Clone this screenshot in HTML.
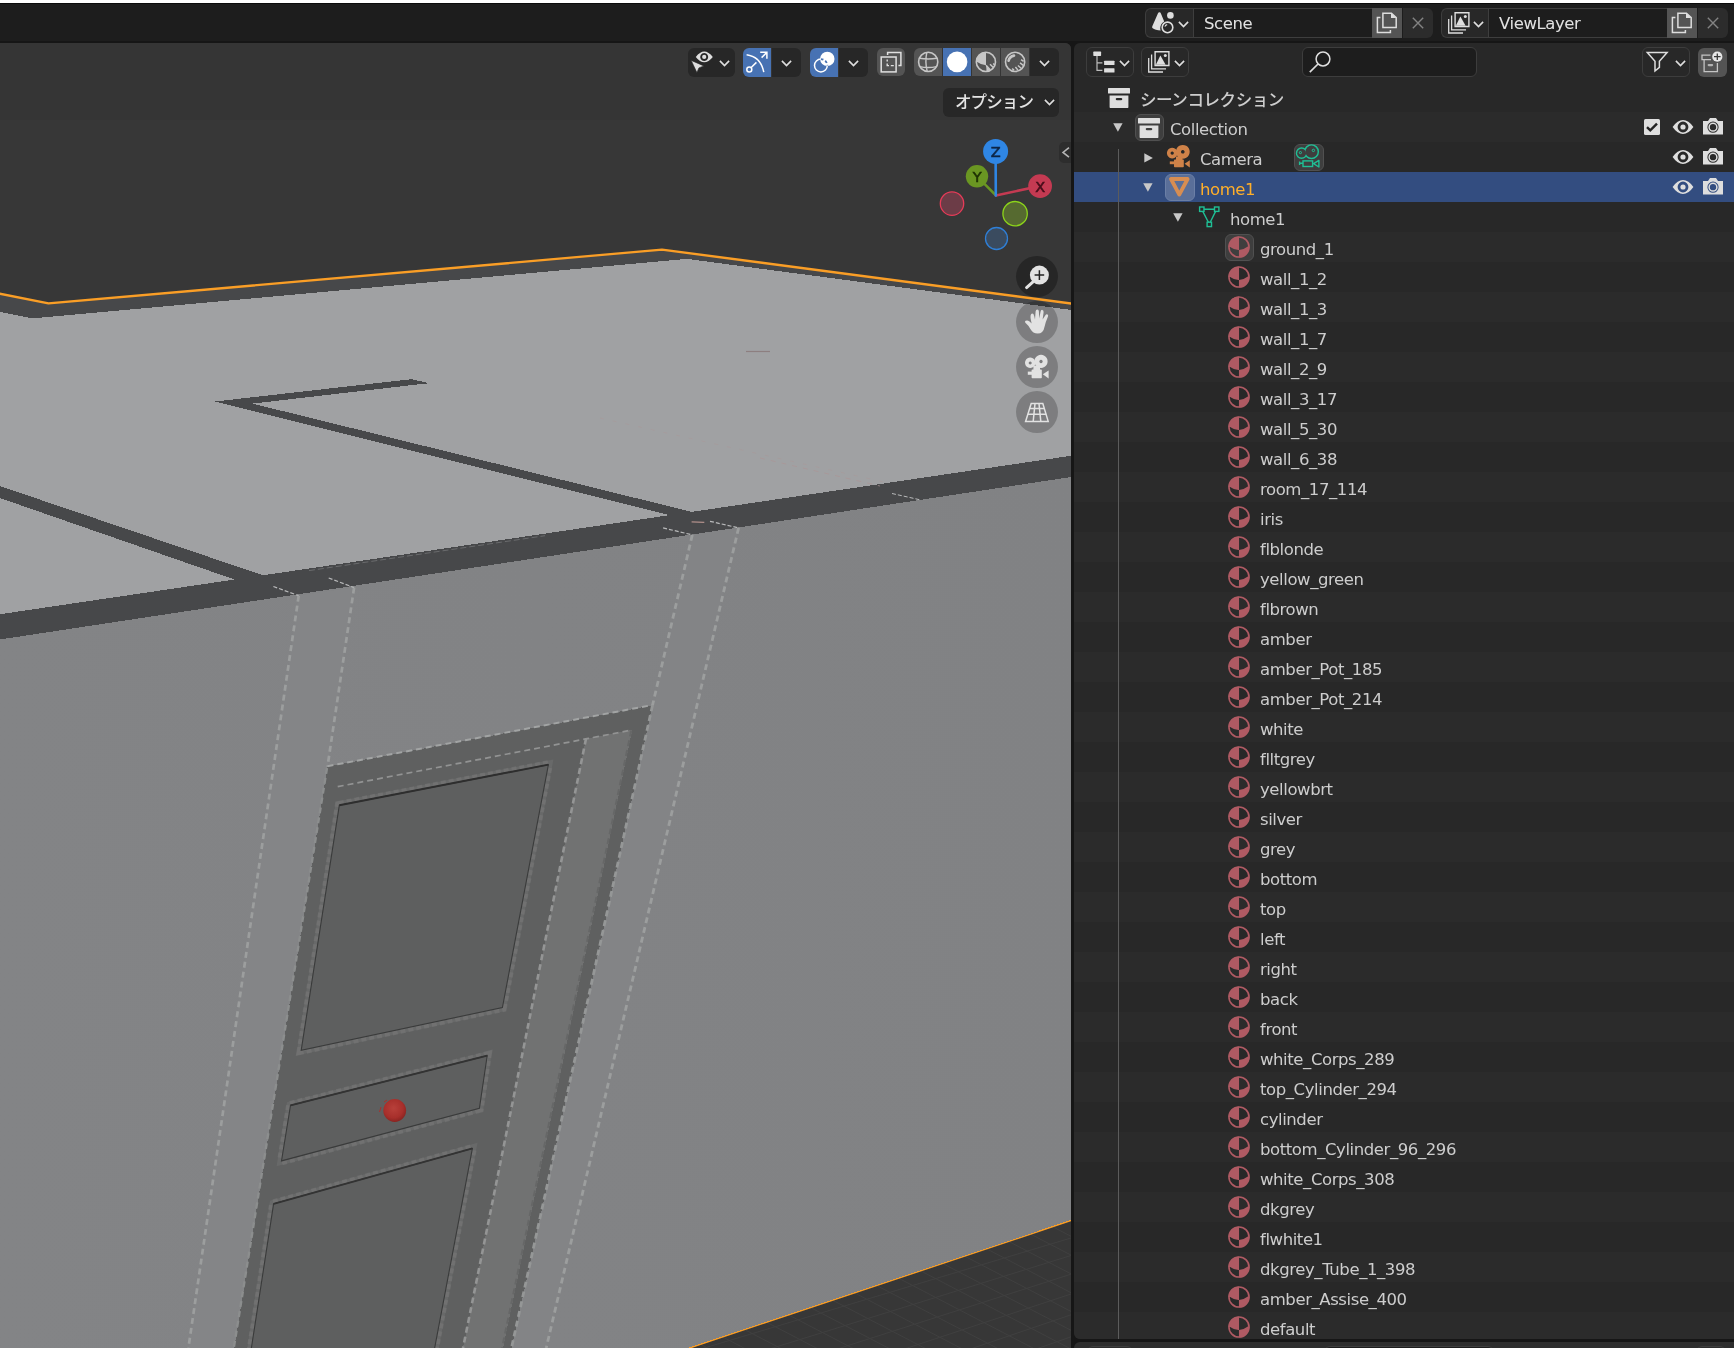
<!DOCTYPE html>
<html lang="ja"><head><meta charset="utf-8"><title>Blender</title>
<style>
html,body{margin:0;padding:0;}
body{width:1734px;height:1348px;overflow:hidden;background:#161616;position:relative;
 font-family:"DejaVu Sans", "Liberation Sans", "Noto Sans CJK JP", sans-serif;font-size:16.5px;color:#cdcdcd;}
div,span,svg{position:absolute;box-sizing:border-box;}
.t{white-space:nowrap;line-height:30px;height:30px;letter-spacing:-0.42px;}
#strip{left:0;top:0;width:1734px;height:3px;background:#fff;}
#topbar{left:0;top:3px;width:1734px;height:38px;background:#1d1d1d;will-change:transform;}
#view{left:0;top:43px;width:1071px;height:1305px;background:#373737;overflow:hidden;border-top-right-radius:6px;will-change:transform;}
#outl{left:1074px;top:43px;width:660px;height:1296px;background:#282828;overflow:hidden;border-top-left-radius:6px;border-bottom-left-radius:6px;will-change:transform;}
#bot{left:1074px;top:1342px;width:660px;height:10px;background:#2e2e2e;border-top-left-radius:6px;}
.row{left:0;width:660px;height:30px;}
.btn{border:1px solid #3d3d3d;border-radius:5px;background:#282828;}
.fld{background:#1d1d1d;border:1px solid #3d3d3d;}
.hl{background:#3e3e3e;border:1px solid #505050;border-radius:6px;}
</style></head><body>

<svg width="0" height="0" style="left:-10px;top:-10px"><defs>
<symbol id="mat" viewBox="0 0 22 22">
<clipPath id="mc"><circle cx="11" cy="11" r="10.4"/></clipPath>
<g clip-path="url(#mc)" fill="#af5a63">
<path d="M11.05 -2 H-2 V11.1 H2.2 Q6.49 14.34 11.05 14.09 Z"/>
<path d="M10.95 14.09 Q15.3 13.85 19.8 10.4 H24 V24 H10.95 Z"/>
</g>
<circle cx="11" cy="11" r="10.05" fill="none" stroke="#af5a63" stroke-width="1.6"/>
</symbol>
<symbol id="eye" viewBox="0 0 22 16">
<path d="M0.6 8 Q5.5 1 11 1 Q16.5 1 21.4 8 Q16.5 15 11 15 Q5.5 15 0.6 8 Z M11 2.6 A5.4 5.4 0 1 0 11 13.4 A5.4 5.4 0 1 0 11 2.6 Z" fill="#dedede" fill-rule="evenodd"/>
<circle cx="11" cy="8" r="2.6" fill="#dedede"/>
</symbol>
<symbol id="cam" viewBox="0 0 22 18">
<path d="M1 4 H6 L8 1 H14 L16 4 H21 V17.5 H1 Z M11 4.6 A5.6 5.6 0 1 0 11 15.8 A5.6 5.6 0 1 0 11 4.6 Z" fill="#dedede" fill-rule="evenodd"/>
<circle cx="11" cy="10.2" r="3.9" fill="none" stroke="#dedede" stroke-width="1.5"/>
</symbol>
<symbol id="chk" viewBox="0 0 16 16">
<rect x="0" y="0" width="16" height="16" rx="1.5" fill="#dedede"/>
<path d="M3 8.2 L6.3 11.4 L13 4.6" fill="none" stroke="#222" stroke-width="2.4"/>
</symbol>
<symbol id="coll" viewBox="0 0 22 20">
<rect x="0" y="0" width="22" height="5.6" rx="0.5" fill="#dedede"/>
<path d="M1.6 7.4 H20.4 V19.2 Q20.4 20 19.6 20 H2.4 Q1.6 20 1.6 19.2 Z M9 9.9 H13 Q14.3 9.9 14.3 11.1 Q14.3 12.3 13 12.3 H9 Q7.7 12.3 7.7 11.1 Q7.7 9.9 9 9.9 Z" fill="#dedede" fill-rule="evenodd"/>
</symbol>
<symbol id="chev" viewBox="0 0 10 6">
<path d="M0.8 0.8 L5 5 L9.2 0.8" fill="none" stroke="#dedede" stroke-width="1.5"/>
</symbol>
<symbol id="vl" viewBox="0 0 22 20">
<path d="M6 0.8 H21.2 V14 H6 Z M7.6 2.4 V12.4 H19.6 V2.4 Z" fill="#dedede" fill-rule="evenodd"/>
<path d="M8 12.4 L12 5 L15 9.5 L16.5 8 L19.6 12.4 Z" fill="#dedede"/>
<circle cx="16.8" cy="5" r="1.3" fill="#dedede"/>
<path d="M3.6 3.4 V16.4 H17.6" fill="none" stroke="#dedede" stroke-width="1.4"/>
<path d="M1 6 V19 H15" fill="none" stroke="#dedede" stroke-width="1.4"/>
</symbol>
<symbol id="copy" viewBox="0 0 22 22">
<path d="M7.5 1 H16 L21 5.5 V15.5 H7.5 Z" fill="none" stroke="#dedede" stroke-width="1.6"/>
<path d="M16 1 V5.5 H21 Z" fill="#dedede"/>
<path d="M4.6 5 H1.2 V20.6 H14.6 V18" fill="none" stroke="#dedede" stroke-width="1.6"/>
</symbol>
<symbol id="xx" viewBox="0 0 12 12">
<path d="M1 1 L11 11 M11 1 L1 11" fill="none" stroke="#8a8a8a" stroke-width="1.4"/>
</symbol>
</defs></svg>
<div id="strip"></div><div id="topbar"></div><div style="left:0;top:3px;width:1734px;height:1px;background:#0b0b0b"></div>
<div id="view">
<div style="left:0;top:0;width:1071px;height:77px;background:#353535"></div>
<svg width="1071" height="1305" viewBox="0 43 1071 1305" style="left:0;top:0">
<defs><linearGradient id="wg" x1="0" y1="0" x2="1" y2="0"><stop offset="0" stop-color="#838486"/><stop offset="1" stop-color="#818284"/></linearGradient><radialGradient id="knob" cx="0.45" cy="0.4" r="0.6"><stop offset="0" stop-color="#b8403a"/><stop offset="0.7" stop-color="#a72f2b"/><stop offset="1" stop-color="#8a2421"/></radialGradient></defs>
<g stroke="#414141" stroke-width="1" opacity="0.9">
<line x1="1071.0" y1="1238.0" x2="471.0" y2="1418.0" stroke="#414141" stroke-width="1" />
<line x1="1071.0" y1="1255.5" x2="471.0" y2="1441.5" stroke="#414141" stroke-width="1" />
<line x1="1071.0" y1="1274.2" x2="471.0" y2="1466.2" stroke="#414141" stroke-width="1" />
<line x1="1071.0" y1="1294.0" x2="471.0" y2="1492.0" stroke="#414141" stroke-width="1" />
<line x1="1071.0" y1="1314.8" x2="471.0" y2="1518.8" stroke="#414141" stroke-width="1" />
<line x1="1071.0" y1="1336.8" x2="471.0" y2="1546.8" stroke="#414141" stroke-width="1" />
<line x1="1071.0" y1="1359.8" x2="471.0" y2="1575.8" stroke="#414141" stroke-width="1" />
<line x1="1071.0" y1="1384.0" x2="471.0" y2="1606.0" stroke="#414141" stroke-width="1" />
<line x1="1071.0" y1="1409.2" x2="471.0" y2="1637.2" stroke="#414141" stroke-width="1" />
<line x1="1071.0" y1="1435.5" x2="471.0" y2="1669.5" stroke="#414141" stroke-width="1" />
<line x1="1071.0" y1="1463.0" x2="471.0" y2="1703.0" stroke="#414141" stroke-width="1" />
<line x1="1071.0" y1="1491.5" x2="471.0" y2="1737.5" stroke="#414141" stroke-width="1" />
<line x1="1071.0" y1="1521.2" x2="471.0" y2="1773.2" stroke="#414141" stroke-width="1" />
<line x1="1071.0" y1="1552.0" x2="471.0" y2="1810.0" stroke="#414141" stroke-width="1" />
<line x1="700.0" y1="1344.0" x2="870.0" y2="1432.4" stroke="#414141" stroke-width="1" />
<line x1="722.0" y1="1336.6" x2="892.0" y2="1425.0" stroke="#414141" stroke-width="1" />
<line x1="744.0" y1="1329.3" x2="914.0" y2="1417.7" stroke="#414141" stroke-width="1" />
<line x1="766.0" y1="1321.9" x2="936.0" y2="1410.3" stroke="#414141" stroke-width="1" />
<line x1="788.0" y1="1314.6" x2="958.0" y2="1403.0" stroke="#414141" stroke-width="1" />
<line x1="810.0" y1="1307.3" x2="980.0" y2="1395.7" stroke="#414141" stroke-width="1" />
<line x1="832.0" y1="1299.9" x2="1002.0" y2="1388.3" stroke="#414141" stroke-width="1" />
<line x1="854.0" y1="1292.6" x2="1024.0" y2="1381.0" stroke="#414141" stroke-width="1" />
<line x1="876.0" y1="1285.2" x2="1046.0" y2="1373.6" stroke="#414141" stroke-width="1" />
<line x1="898.0" y1="1277.9" x2="1068.0" y2="1366.3" stroke="#414141" stroke-width="1" />
<line x1="920.0" y1="1270.5" x2="1090.0" y2="1358.9" stroke="#414141" stroke-width="1" />
<line x1="942.0" y1="1263.2" x2="1112.0" y2="1351.6" stroke="#414141" stroke-width="1" />
<line x1="964.0" y1="1255.8" x2="1134.0" y2="1344.2" stroke="#414141" stroke-width="1" />
<line x1="986.0" y1="1248.5" x2="1156.0" y2="1336.9" stroke="#414141" stroke-width="1" />
<line x1="1008.0" y1="1241.1" x2="1178.0" y2="1329.5" stroke="#414141" stroke-width="1" />
<line x1="1030.0" y1="1233.8" x2="1200.0" y2="1322.2" stroke="#414141" stroke-width="1" />
<line x1="1052.0" y1="1226.4" x2="1222.0" y2="1314.8" stroke="#414141" stroke-width="1" />
<line x1="1074.0" y1="1219.1" x2="1244.0" y2="1307.5" stroke="#414141" stroke-width="1" />
<line x1="1096.0" y1="1211.7" x2="1266.0" y2="1300.1" stroke="#414141" stroke-width="1" />
<line x1="1118.0" y1="1204.4" x2="1288.0" y2="1292.8" stroke="#414141" stroke-width="1" />
<line x1="1140.0" y1="1197.0" x2="1310.0" y2="1285.4" stroke="#414141" stroke-width="1" />
<line x1="1162.0" y1="1189.7" x2="1332.0" y2="1278.1" stroke="#414141" stroke-width="1" />
</g>
<polygon points="-10.0,291.8 48.5,303.4 662.0,249.6 1085.0,305.3 1085.0,1215.3 688.0,1348.0 680.0,1360.0 -10.0,1360.0" fill="#47484a" shape-rendering="crispEdges" />
<polygon points="-10.0,291.8 48.5,303.4 662.0,249.6 1085.0,305.3 1085.0,1215.3 688.0,1348.0 680.0,1360.0 -10.0,1360.0" fill="none" stroke="#fa9e26" stroke-width="2.4" stroke-linejoin="round"/>
<polygon points="-10.0,310.0 32.0,318.4 687.2,258.9 1085.0,311.8 1085.0,453.7 -10.0,615.7" fill="#a0a1a3" shape-rendering="crispEdges" />
<polygon points="-10.0,482.7 265.3,576.1 235.3,579.8 -10.0,494.6" fill="#47484a" shape-rendering="crispEdges" />
<polygon points="215.0,401.5 411.4,379.2 429.4,383.2 408.4,385.5 252.5,403.6 692.3,512.0 670.7,515.4" fill="#47484a" shape-rendering="crispEdges" />
<line x1="746.0" y1="351.5" x2="770.0" y2="351.5" stroke="#8d7f80" stroke-width="1.2" />
<line x1="600.0" y1="418.0" x2="888.0" y2="483.0" stroke="#a8999a" stroke-width="1" stroke-dasharray="4 9" opacity="0.6"/>
<line x1="760.0" y1="458.0" x2="880.0" y2="486.0" stroke="#ab9596" stroke-width="1" stroke-dasharray="5 6" opacity="0.7"/>
<polygon points="-10.0,641.0 1085.0,474.9 1085.0,1215.3 688.0,1348.0 680.0,1360.0 -10.0,1360.0" fill="url(#wg)" shape-rendering="crispEdges" />
<line x1="273.4" y1="586.5" x2="298.7" y2="595.7" stroke="#b9babb" stroke-width="1.2" stroke-dasharray="4 2"/>
<line x1="328.7" y1="578.0" x2="354.1" y2="587.6" stroke="#b9babb" stroke-width="1.2" stroke-dasharray="4 2"/>
<line x1="663.1" y1="527.9" x2="692.3" y2="534.9" stroke="#b9babb" stroke-width="1.2" stroke-dasharray="4 2"/>
<line x1="710.0" y1="521.3" x2="738.6" y2="527.9" stroke="#b9babb" stroke-width="1.2" stroke-dasharray="4 2"/>
<line x1="691.6" y1="521.9" x2="704.3" y2="522.4" stroke="#b08f8a" stroke-width="1.2" />
<line x1="892.0" y1="493.5" x2="920.0" y2="499.8" stroke="#b9babb" stroke-width="1.0" stroke-dasharray="4 2"/>
<line x1="309.0" y1="570.6" x2="545.0" y2="535.7" stroke="#6a6b6d" stroke-width="1" stroke-dasharray="6 3"/>
<polygon points="298.7,595.7 354.1,587.6 327.5,766.6 234.3,1348.0 188.4,1348.0" fill="#848587" shape-rendering="crispEdges" />
<polygon points="692.3,534.9 738.6,527.9 546.2,1348.0 511.5,1348.0" fill="#838486" shape-rendering="crispEdges" />
<polygon points="327.5,766.6 652.5,705.4 511.5,1348.0 234.3,1348.0" fill="#5f6060" shape-rendering="crispEdges" />
<polygon points="586.0,738.7 632.3,729.9 503.0,1348.0 463.0,1348.0" fill="#717272" shape-rendering="crispEdges" />
<clipPath id="leafclip"><polygon points="328,760 566,716 448,1348 238,1348"/></clipPath>
<g clip-path="url(#leafclip)">
<polygon points="339.3,805.3 548.4,764.6 502.4,1007.6 301.2,1050.3" fill="none" stroke="#686969" stroke-width="8" stroke-linejoin="miter"/>
<polygon points="339.3,805.3 548.4,764.6 502.4,1007.6 301.2,1050.3" fill="none" stroke="#7c7d7d" stroke-width="9" stroke-linejoin="miter" stroke-dasharray="5 3" opacity="0.45"/>
<polygon points="339.3,805.3 548.4,764.6 502.4,1007.6 301.2,1050.3" fill="#5e5f5f" stroke="#3a3b3b" stroke-width="1.1"/>
<line x1="339.3" y1="805.3" x2="548.4" y2="764.6" stroke="#2e2e2e" stroke-width="1.9" />
<polygon points="290.5,1105.4 487.2,1055.6 479.4,1108.4 281.5,1160.9" fill="none" stroke="#686969" stroke-width="8" stroke-linejoin="miter"/>
<polygon points="290.5,1105.4 487.2,1055.6 479.4,1108.4 281.5,1160.9" fill="none" stroke="#7c7d7d" stroke-width="9" stroke-linejoin="miter" stroke-dasharray="5 3" opacity="0.45"/>
<polygon points="290.5,1105.4 487.2,1055.6 479.4,1108.4 281.5,1160.9" fill="#5e5f5f" stroke="#3a3b3b" stroke-width="1.1"/>
<line x1="290.5" y1="1105.4" x2="487.2" y2="1055.6" stroke="#333333" stroke-width="1.9" />
<polygon points="273.6,1203.8 472.4,1148.4 430.5,1370.0 248.0,1370.0" fill="none" stroke="#686969" stroke-width="8" stroke-linejoin="miter"/>
<polygon points="273.6,1203.8 472.4,1148.4 430.5,1370.0 248.0,1370.0" fill="none" stroke="#7c7d7d" stroke-width="9" stroke-linejoin="miter" stroke-dasharray="5 3" opacity="0.45"/>
<polygon points="273.6,1203.8 472.4,1148.4 430.5,1370.0 248.0,1370.0" fill="#5e5f5f" stroke="#3a3b3b" stroke-width="1.1"/>
<line x1="273.6" y1="1203.8" x2="472.4" y2="1148.4" stroke="#333333" stroke-width="1.9" />
</g>
<polyline points="298.7,595.7 188.4,1348.0" fill="none" stroke="#9c9e9e" stroke-width="2.7" stroke-dasharray="6 4"/>
<polyline points="354.1,587.6 327.5,766.6" fill="none" stroke="#9c9e9e" stroke-width="2.7" stroke-dasharray="6 4"/>
<polyline points="327.0,768.0 233.8,1348.0" fill="none" stroke="#8c8e8e" stroke-width="2.4" stroke-dasharray="6 4"/>
<polyline points="327.5,766.2 652.5,705.0" fill="none" stroke="#a2a4a4" stroke-width="2.0" stroke-dasharray="6 4"/>
<polyline points="337.7,786.6 587.0,738.7 632.3,729.9" fill="none" stroke="#929393" stroke-width="1.7" stroke-dasharray="6 4"/>
<polyline points="692.3,534.9 652.5,705.4" fill="none" stroke="#9c9e9e" stroke-width="2.8" stroke-dasharray="6 4"/>
<polyline points="652.5,705.4 511.5,1348.0" fill="none" stroke="#959797" stroke-width="2.8" stroke-dasharray="6 4"/>
<polyline points="738.6,527.9 546.2,1348.0" fill="none" stroke="#9c9e9e" stroke-width="2.8" stroke-dasharray="6 4"/>
<polyline points="586.0,738.7 463.0,1348.0" fill="none" stroke="#949595" stroke-width="2.6" stroke-dasharray="6 4"/>
<polyline points="631.3,730.5 502.0,1348.0" fill="none" stroke="#666767" stroke-width="2.0" stroke-dasharray="6 4"/>
<circle cx="394.7" cy="1110.5" r="11.4" fill="url(#knob)"/>
<path d="M381 1107 l-1.5 5 M384 1102 l3 -2" stroke="#a8302c" stroke-width="1" fill="none"/>
</svg>
<div style="left:688.0px;top:4.5px;width:46.5px;height:29.0px;background:#272727;border-radius:6px"></div>
<svg style="left:689.0px;top:6.0px" width="26" height="26" viewBox="689 49 26 26">
<path fill-rule="evenodd" fill="#dedede" d="M695.8 56.9 Q700 51.4 704.2 51.4 Q708.6 51.4 712.8 56.9 Q708.6 62.3 704.2 62.3 Q700 62.3 695.8 56.9 Z M704.2 52.9 a4 4 0 1 0 0.01 0 Z"/>
<circle cx="704.2" cy="56.9" r="2.1" fill="#dedede"/>
<path d="M691.2 60.4 L703.8 65.9 L698.9 67.9 L696.9 72.6 Z" fill="#dedede" stroke="#272727" stroke-width="0.6"/></svg>
<svg style="left:719.4px;top:16.7px" width="11" height="7" viewBox="0 0 11 7"><path d="M0.9 0.9 L5.5 5.6 L10.1 0.9" fill="none" stroke="#dedede" stroke-width="1.6"/></svg>
<div style="left:743.0px;top:4.5px;width:28.2px;height:29.0px;background:#4772b3;border-radius:6px 0 0 6px"></div>
<div style="left:771.8px;top:4.5px;width:29.4px;height:29.0px;background:#272727;border-radius:0 6px 6px 0"></div>
<svg style="left:744.0px;top:6.0px" width="26" height="26" viewBox="744 49 26 26">
<g fill="none" stroke="#ffffff" stroke-width="1.5">
<path d="M746.6 54.8 Q760.6 56.6 763.8 72.2"/>
<circle cx="749.3" cy="69.4" r="2.5"/>
<path d="M751.2 67.5 L756.4 62.4"/>
<path d="M761.6 57.6 L766.8 52.4 M760.2 52.3 H766.9 V58.8"/></g></svg>
<svg style="left:780.5px;top:16.7px" width="11" height="7" viewBox="0 0 11 7"><path d="M0.9 0.9 L5.5 5.6 L10.1 0.9" fill="none" stroke="#dedede" stroke-width="1.6"/></svg>
<div style="left:810.0px;top:4.5px;width:28.2px;height:29.0px;background:#4772b3;border-radius:6px 0 0 6px"></div>
<div style="left:838.8px;top:4.5px;width:29.4px;height:29.0px;background:#272727;border-radius:0 6px 6px 0"></div>
<svg style="left:811.0px;top:6.0px" width="26" height="26" viewBox="811 49 26 26">
<circle cx="827.3" cy="58.9" r="7.2" fill="#ffffff"/>
<circle cx="820.9" cy="65.5" r="6.4" fill="none" stroke="#ffffff" stroke-width="1.5"/>
<path d="M820.9 59.1 A6.4 6.4 0 0 1 827.3 65.5" fill="none" stroke="#4772b3" stroke-width="1.7" stroke-dasharray="2.6 2"/></svg>
<svg style="left:847.6px;top:16.7px" width="11" height="7" viewBox="0 0 11 7"><path d="M0.9 0.9 L5.5 5.6 L10.1 0.9" fill="none" stroke="#dedede" stroke-width="1.6"/></svg>
<div style="left:877.2px;top:5.0px;width:27.6px;height:28.2px;background:#545454;border-radius:6px"></div>
<svg style="left:878.0px;top:6.0px" width="26" height="26" viewBox="878 49 26 26">
<g fill="none" stroke="#e0e0e0" stroke-width="1.5">
<path d="M887.6 55 V52.4 H900.9 V65.6 H898.4"/>
<rect x="881.2" y="57" width="14.9" height="14.9"/>
<path d="M887.2 59.6 V61.6 M887.2 63.4 V65.6 H889 M890.8 65.6 H893.8" stroke-width="1.4"/></g></svg>
<div style="left:914.0px;top:5.0px;width:28.4px;height:28.2px;background:#545454;border-radius:6px 0 0 6px"></div>
<div style="left:943.0px;top:5.0px;width:28.2px;height:28.2px;background:#4772b3;border-radius:0"></div>
<div style="left:972.0px;top:5.0px;width:28.2px;height:28.2px;background:#545454;border-radius:0"></div>
<div style="left:1001.0px;top:5.0px;width:28.2px;height:28.2px;background:#545454;border-radius:0"></div>
<div style="left:1030.0px;top:5.0px;width:29.2px;height:28.2px;background:#272727;border-radius:0 6px 6px 0"></div>
<svg style="left:914.0px;top:5.0px" width="116" height="29" viewBox="914 48 116 29">
<g fill="none" stroke="#c6c6c6" stroke-width="1.6">
<circle cx="928.2" cy="61.9" r="9.6"/>
<path d="M919.4 58.3 Q928 59.6 937 58.3 M919.8 66.6 Q928 68.4 936.6 66.6 M926.8 52.4 Q924.8 62 927.2 71.4" stroke-width="1.4"/>
</g>
<circle cx="957.1" cy="61.9" r="10.3" fill="#ffffff"/>
<clipPath id="mp"><circle cx="985.9" cy="61.9" r="9.8"/></clipPath>
<g clip-path="url(#mp)">
<path d="M986 50 H974 V62.1 H977.2 Q981.4 65.2 986 65.3 Z" fill="#c6c6c6"/>
<path d="M986.1 65.3 L990.2 69.8 M990 64.2 L993.6 67.8 M993.2 63.5 L995.6 65.9" stroke="#c6c6c6" stroke-width="1.5" fill="none"/>
<path d="M986.1 65.3 L986.6 72 L990.2 69.8 Z" fill="#c6c6c6"/>
</g>
<circle cx="985.9" cy="61.9" r="9.6" fill="none" stroke="#c6c6c6" stroke-width="1.6"/>
<clipPath id="rp"><circle cx="1015.1" cy="61.9" r="9.8"/></clipPath>
<g clip-path="url(#rp)" fill="none" stroke="#c6c6c6">
<path d="M1008.6 60.7 Q1009.4 56.6 1014 55.6" stroke-width="2.7" stroke-linecap="round"/>
<path d="M1012.2 68.4 L1014 70.3 M1015.4 67.1 L1017.9 69.9 M1017.9 65.5 L1021.1 68.2 M1020 62.8 L1023.3 65.3 M1021.1 59.6 L1023.6 61.4" stroke-width="1.5"/>
</g>
<circle cx="1015.1" cy="61.9" r="9.6" fill="none" stroke="#c6c6c6" stroke-width="1.6"/>
</svg>
<svg style="left:1038.5px;top:16.7px" width="11" height="7" viewBox="0 0 11 7"><path d="M0.9 0.9 L5.5 5.6 L10.1 0.9" fill="none" stroke="#dedede" stroke-width="1.6"/></svg>
<div style="left:943.0px;top:45.0px;width:116.2px;height:28.6px;background:#272727;border-radius:6px"></div>
<span class="t" style="left:955px;top:45px;color:#e4e4e4;letter-spacing:-0.9px;font-weight:500">オプション</span>
<svg style="left:1043.9px;top:56.3px" width="11" height="7" viewBox="0 0 11 7"><path d="M0.9 0.9 L5.5 5.6 L10.1 0.9" fill="none" stroke="#dedede" stroke-width="1.6"/></svg>
<div style="left:1059.4px;top:99.0px;width:14.0px;height:20.6px;background:#2d2d2d;border-radius:5px 0 0 5px"></div>
<svg style="left:1060.0px;top:102.0px" width="11" height="15" viewBox="1060 145 11 15"><path d="M1069 147.6 L1063 152.4 L1069 157.2" fill="none" stroke="#b4b4b4" stroke-width="1.6"/></svg>
<svg style="left:935.0px;top:92.0px" width="125" height="120" viewBox="935 135 125 120">
<g stroke-width="2.6" stroke-linecap="round">
<line x1="995.9" y1="195.4" x2="977" y2="176.3" stroke="#6a9622"/>
<line x1="995.9" y1="195.4" x2="1040.1" y2="186.1" stroke="#c43a52"/>
<line x1="995.8" y1="195.4" x2="995.6" y2="151.4" stroke="#2f86e4"/>
</g>
<circle cx="952" cy="203.6" r="11.7" fill="#6c3c47" stroke="#e63b58" stroke-width="1.3"/>
<circle cx="1015.1" cy="213.7" r="12.2" fill="#566a30" stroke="#8cd41a" stroke-width="1.3"/>
<circle cx="996.5" cy="238.5" r="11" fill="#3a4b5f" stroke="#2f7fd6" stroke-width="1.3"/>
<circle cx="977" cy="176.3" r="11.2" fill="#6a9622"/>
<circle cx="1040.1" cy="186.1" r="11.9" fill="#c43a52"/>
<circle cx="995.6" cy="151.4" r="12.5" fill="#2f86e4"/>
<g font-family='"DejaVu Sans","Liberation Sans",sans-serif' font-size="14.5" text-anchor="middle" stroke-width="0.55">
<text x="995.7" y="156.8" fill="#0c2545" stroke="#0c2545">Z</text>
<text x="977.2" y="181.6" fill="#1d3003" stroke="#1d3003">Y</text>
<text x="1040.2" y="191.5" fill="#470d1a" stroke="#470d1a">X</text></g>
</svg>
<div style="left:1016.1px;top:212.6px;width:41.8px;height:41.8px;border-radius:50%;background:rgba(0,0,0,0.30)"></div>
<div style="left:1016.1px;top:258.0px;width:41.8px;height:41.8px;border-radius:50%;background:rgba(0,0,0,0.22)"></div>
<div style="left:1016.1px;top:302.8px;width:41.8px;height:41.8px;border-radius:50%;background:rgba(0,0,0,0.22)"></div>
<div style="left:1016.1px;top:347.9px;width:41.8px;height:41.8px;border-radius:50%;background:rgba(0,0,0,0.22)"></div>
<svg style="left:1020.0px;top:217.0px" width="36" height="170" viewBox="1020 260 36 170">
<circle cx="1039.4" cy="275.1" r="9.5" fill="#e2e2e2"/>
<path d="M1033 281.8 L1026.6 287.6" stroke="#e2e2e2" stroke-width="3" stroke-linecap="round"/>
<path d="M1034.6 275.1 H1044.2 M1039.4 270.3 V279.9" stroke="#222" stroke-width="1.5"/>
<path fill="#e2e2e2" d="M1031 320.6 Q1029.6 314.4 1032 313.6 Q1033.6 313.4 1034.2 316 L1035 319.4 L1035.6 311.6 Q1035.8 309.6 1037.3 309.6 Q1038.8 309.7 1038.9 311.6 L1039.2 318.6 L1040.6 311.4 Q1041 309.6 1042.4 309.9 Q1043.8 310.3 1043.6 312.2 L1042.6 319.4 L1045.4 315.2 Q1046.4 313.8 1047.6 314.6 Q1048.6 315.4 1047.8 317 Q1045.6 322 1044.6 326.4 Q1043.4 333.4 1037.6 333.6 Q1033 333.6 1030.4 329 Q1028.4 325.4 1025.4 322.8 Q1024.4 321.6 1025.6 320.8 Q1027.4 320 1029.2 321.2 Q1030.4 322 1031.6 323.6 Z"/>
<path fill-rule="evenodd" fill="#e2e2e2" d="M1030.2 357.6 a5.2 5.2 0 1 0 0.01 0 Z M1030.2 361.4 a1.5 1.5 0 1 1 -0.01 0 Z"/>
<path fill-rule="evenodd" fill="#e2e2e2" d="M1041 354.8 a6.6 6.6 0 1 0 0.01 0 Z M1041 359.8 a1.7 1.7 0 1 1 -0.01 0 Z"/>
<rect x="1031.6" y="369.6" width="10.2" height="8.6" rx="0.8" fill="#e2e2e2"/>
<rect x="1027.8" y="371.6" width="4.4" height="3.2" fill="#e2e2e2"/><rect x="1033.4" y="365.6" width="6.6" height="4.6" fill="#e2e2e2"/>
<path d="M1042.8 374.2 L1048.6 370.6 V378.4 Z" fill="#e2e2e2"/>
<g fill="none" stroke="#e2e2e2" stroke-width="1.5">
<path d="M1031.2 403.6 H1042.8 L1048.2 421.4 H1025.6 Z"/>
<path d="M1035 403.6 L1033.2 421.4 M1039 403.6 L1040.8 421.4 M1029.6 408.4 H1044.4 M1027.8 414.2 H1046.2"/></g>
</svg>
</div>
<div id="outl">
<div class="btn" style="left:12px;top:4px;width:48px;height:30px;border-radius:6px"></div>
<svg style="left:18.0px;top:7.0px" width="25" height="25" viewBox="1092 50 25 25">
<rect x="1093.3" y="51.6" width="7.8" height="4.3" rx="0.6" fill="#dedede"/>
<rect x="1104.1" y="60.7" width="10.4" height="4.3" rx="0.6" fill="#dedede"/>
<rect x="1104.1" y="68.2" width="10.4" height="4.3" rx="0.6" fill="#dedede"/>
<path d="M1097 55.9 V70.4 H1102.4 M1097 62.8 H1102.4" fill="none" stroke="#bdbdbd" stroke-width="1.2"/>
</svg>
<svg style="left:44.5px;top:16.8px" width="11" height="7" viewBox="0 0 11 7"><path d="M0.9 0.9 L5.5 5.6 L10.1 0.9" fill="none" stroke="#dedede" stroke-width="1.6"/></svg>
<div class="btn" style="left:67px;top:4px;width:48px;height:30px;border-radius:6px"></div>
<svg style="left:73.2px;top:7.4px" width="25" height="25" viewBox="1147.2 50.4 25 25"><g transform="translate(1148.2 51.4)">
<path fill-rule="evenodd" fill="#dedede" d="M6.4 0 H21.6 V15.2 H6.4 Z M7.8 1.4 V13.8 H20.2 V1.4 Z"/>
<path d="M7.8 13.8 L12.4 4.4 L17.6 13.8 Z" fill="#dedede"/><circle cx="17.3" cy="4.6" r="1.5" fill="#dedede"/>
<path d="M3.6 3.6 V17.9 H18" fill="none" stroke="#dedede" stroke-width="1.3"/>
<path d="M0.7 7 V21 H15" fill="none" stroke="#dedede" stroke-width="1.3"/></g></svg>
<svg style="left:99.5px;top:16.9px" width="11" height="7" viewBox="0 0 11 7"><path d="M0.9 0.9 L5.5 5.6 L10.1 0.9" fill="none" stroke="#dedede" stroke-width="1.6"/></svg>
<div class="btn" style="left:228px;top:4px;width:175px;height:30px;border-radius:6px;background:#1d1d1d"></div>
<svg style="left:232.0px;top:6.0px" width="28" height="26" viewBox="1306 49 28 26">
<circle cx="1323" cy="59" r="6.9" fill="none" stroke="#dedede" stroke-width="1.5"/>
<path d="M1318 64 L1309.8 72.2" stroke="#dedede" stroke-width="1.7" fill="none"/></svg>
<div class="btn" style="left:568px;top:4px;width:48px;height:30px;border-radius:6px"></div>
<svg style="left:570.0px;top:6.0px" width="26" height="26" viewBox="1644 49 26 26">
<path d="M1647.3 52.4 H1667.1 L1659.4 61.2 V67.4 L1655 71 V61.2 Z" fill="none" stroke="#dedede" stroke-width="1.5" stroke-linejoin="miter"/></svg>
<svg style="left:600.6px;top:16.8px" width="11" height="7" viewBox="0 0 11 7"><path d="M0.9 0.9 L5.5 5.6 L10.1 0.9" fill="none" stroke="#dedede" stroke-width="1.6"/></svg>
<div style="left:623.5px;top:4.5px;width:29px;height:29px;border-radius:6px;background:#545454"></div>
<svg style="left:625.0px;top:6.0px" width="26" height="26" viewBox="1699 49 26 26">
<path d="M1710.5 55.2 H1702 V59.6 H1711" fill="none" stroke="#c4c4c4" stroke-width="1.3"/>
<path d="M1704.1 59.6 V71.6 H1717.4 V63" fill="none" stroke="#c4c4c4" stroke-width="1.3"/>
<rect x="1707.6" y="64" width="5.6" height="2.2" rx="1.1" fill="#b4b4b4"/>
<circle cx="1717.3" cy="56.7" r="5.1" fill="#e6e6e6"/>
<path d="M1714 56.7 H1720.6 M1717.3 53.4 V60" stroke="#3a3a3a" stroke-width="1.3"/></svg>
<div class="row" style="top:69px;background:#2b2b2b"></div>
<div class="row" style="top:129px;background:#334d80"></div>
<div class="row" style="top:189px;background:#2b2b2b"></div>
<div class="row" style="top:249px;background:#2b2b2b"></div>
<div class="row" style="top:309px;background:#2b2b2b"></div>
<div class="row" style="top:369px;background:#2b2b2b"></div>
<div class="row" style="top:429px;background:#2b2b2b"></div>
<div class="row" style="top:489px;background:#2b2b2b"></div>
<div class="row" style="top:549px;background:#2b2b2b"></div>
<div class="row" style="top:609px;background:#2b2b2b"></div>
<div class="row" style="top:669px;background:#2b2b2b"></div>
<div class="row" style="top:729px;background:#2b2b2b"></div>
<div class="row" style="top:789px;background:#2b2b2b"></div>
<div class="row" style="top:849px;background:#2b2b2b"></div>
<div class="row" style="top:909px;background:#2b2b2b"></div>
<div class="row" style="top:969px;background:#2b2b2b"></div>
<div class="row" style="top:1029px;background:#2b2b2b"></div>
<div class="row" style="top:1089px;background:#2b2b2b"></div>
<div class="row" style="top:1149px;background:#2b2b2b"></div>
<div class="row" style="top:1209px;background:#2b2b2b"></div>
<div class="row" style="top:1269px;background:#2b2b2b"></div>
<div style="left:44px;top:106px;width:1px;height:1200px;background:#5c5c5c"></div>
<svg style="left:34.0px;top:45.0px" width="22" height="20" ><use href="#coll"/></svg>
<span class="t" style="left:66px;top:43px;"><span style="position:static;font-weight:500">シーンコレクション</span></span>
<svg style="left:39.1px;top:80.2px" width="10" height="9"><path d="M0.2 0.3 H9.6 L4.9 8.7 Z" fill="#c8c8c8"/></svg>
<div class="hl" style="left:60.5px;top:70.5px;width:29px;height:27px"></div>
<svg style="left:64.0px;top:75.0px" width="22" height="20" ><use href="#coll"/></svg>
<span class="t" style="left:96px;top:72px;">Collection</span>
<svg style="left:570.0px;top:76.0px" width="16" height="16" ><use href="#chk"/></svg>
<svg style="left:598.0px;top:75.5px" width="22" height="16" ><use href="#eye"/></svg>
<svg style="left:628.0px;top:74.0px" width="22" height="18" ><use href="#cam"/></svg>
<svg style="left:70.4px;top:109.6px" width="10" height="10"><path d="M0.3 0.2 V9.6 L8.9 4.9 Z" fill="#c8c8c8"/></svg>
<svg style="left:90.0px;top:100.0px" width="28" height="28" viewBox="1164 143 28 28">
<path fill-rule="evenodd" fill="#cf8248" d="M1172.2 147.8 a5.3 5.3 0 1 0 0.01 0 Z M1172.2 151.5 a1.6 1.6 0 1 1 -0.01 0 Z"/>
<path fill-rule="evenodd" fill="#cf8248" d="M1182.8 144.9 a6.9 6.9 0 1 0 0.01 0 Z M1182.8 150 a1.8 1.8 0 1 1 -0.01 0 Z"/>
<rect x="1174" y="159.6" width="9.8" height="7.6" rx="0.8" fill="#cf8248"/>
<rect x="1169.8" y="161.4" width="4.6" height="2.8" fill="#cf8248"/><rect x="1176" y="156.5" width="6.4" height="4" fill="#cf8248"/>
<path d="M1184.6 163.8 L1189.8 160.2 V167.4 Z" fill="#cf8248"/>
</svg>
<span class="t" style="left:126px;top:102px;">Camera</span>
<div class="hl" style="left:219.5px;top:100.5px;width:30px;height:27px"></div>
<svg style="left:220.0px;top:100.0px" width="30" height="28" viewBox="1294 143 30 28">
<g fill="none" stroke="#1fbf95" stroke-width="2.9">
<circle cx="1301.6" cy="153.2" r="4.4"/><circle cx="1311.5" cy="151.7" r="6.1"/></g>
<g fill="#3e3e3e"><circle cx="1301.6" cy="153.2" r="4.4"/><circle cx="1311.5" cy="151.7" r="6.1"/></g>
<g fill="none" stroke="#1fbf95" stroke-width="1.4">
<circle cx="1300.4" cy="152.6" r="1.1" stroke-width="1"/><circle cx="1313.4" cy="150.4" r="1.2" stroke-width="1"/>
<rect x="1303" y="160.9" width="9.6" height="5.6"/>
<path d="M1299.4 163.2 H1303 M1299.6 161.6 V165"/>
<path d="M1313.6 163.7 L1318.9 160.4 V167 Z" stroke-linejoin="round"/>
</g></svg>
<svg style="left:598.0px;top:105.5px" width="22" height="16" ><use href="#eye"/></svg>
<svg style="left:628.0px;top:104.0px" width="22" height="18" ><use href="#cam"/></svg>
<svg style="left:69.1px;top:140.2px" width="10" height="9"><path d="M0.2 0.3 H9.6 L4.9 8.7 Z" fill="#c8c8c8"/></svg>
<div style="left:90.5px;top:130.5px;width:30px;height:27px;background:#5a6f99;border:1px solid #6b7fa6;border-radius:6px"></div>
<svg style="left:91.0px;top:131.0px" width="30" height="27" viewBox="1165 174 30 27">
<path d="M1171 179 H1187.6 L1179.3 194.6 Z" fill="none" stroke="#d78d52" stroke-width="3.8" stroke-linejoin="round"/>
</svg>
<span class="t" style="left:126px;top:132px;color:#ffaf29;">home1</span>
<svg style="left:598.0px;top:135.5px" width="22" height="16" ><use href="#eye"/></svg>
<svg style="left:628.0px;top:134.0px" width="22" height="18" ><use href="#cam"/></svg>
<svg style="left:99.1px;top:170.2px" width="10" height="9"><path d="M0.2 0.3 H9.6 L4.9 8.7 Z" fill="#c8c8c8"/></svg>
<svg style="left:123.0px;top:162.0px" width="26" height="24" viewBox="1197 205 26 24">
<g fill="none" stroke="#1fbf95" stroke-width="1.4">
<path d="M1203.8 209.2 H1214.6 M1202.8 211.4 L1208.4 222.2 M1215.6 211.4 L1210.2 222.2"/>
<rect x="1199.6" y="207" width="4.4" height="4.4"/><rect x="1214.5" y="207" width="4.4" height="4.4"/>
<rect x="1207.1" y="222.2" width="4.4" height="4.4"/>
</g></svg>
<span class="t" style="left:156px;top:162px;">home1</span>
<div class="hl" style="left:150.5px;top:190.5px;width:29px;height:27px"></div>
<svg style="left:154.0px;top:193.0px" width="22" height="22" ><use href="#mat"/></svg>
<span class="t" style="left:186px;top:192px;">ground_1</span>
<svg style="left:154.0px;top:223.0px" width="22" height="22" ><use href="#mat"/></svg>
<span class="t" style="left:186px;top:222px;">wall_1_2</span>
<svg style="left:154.0px;top:253.0px" width="22" height="22" ><use href="#mat"/></svg>
<span class="t" style="left:186px;top:252px;">wall_1_3</span>
<svg style="left:154.0px;top:283.0px" width="22" height="22" ><use href="#mat"/></svg>
<span class="t" style="left:186px;top:282px;">wall_1_7</span>
<svg style="left:154.0px;top:313.0px" width="22" height="22" ><use href="#mat"/></svg>
<span class="t" style="left:186px;top:312px;">wall_2_9</span>
<svg style="left:154.0px;top:343.0px" width="22" height="22" ><use href="#mat"/></svg>
<span class="t" style="left:186px;top:342px;">wall_3_17</span>
<svg style="left:154.0px;top:373.0px" width="22" height="22" ><use href="#mat"/></svg>
<span class="t" style="left:186px;top:372px;">wall_5_30</span>
<svg style="left:154.0px;top:403.0px" width="22" height="22" ><use href="#mat"/></svg>
<span class="t" style="left:186px;top:402px;">wall_6_38</span>
<svg style="left:154.0px;top:433.0px" width="22" height="22" ><use href="#mat"/></svg>
<span class="t" style="left:186px;top:432px;">room_17_114</span>
<svg style="left:154.0px;top:463.0px" width="22" height="22" ><use href="#mat"/></svg>
<span class="t" style="left:186px;top:462px;">iris</span>
<svg style="left:154.0px;top:493.0px" width="22" height="22" ><use href="#mat"/></svg>
<span class="t" style="left:186px;top:492px;">flblonde</span>
<svg style="left:154.0px;top:523.0px" width="22" height="22" ><use href="#mat"/></svg>
<span class="t" style="left:186px;top:522px;">yellow_green</span>
<svg style="left:154.0px;top:553.0px" width="22" height="22" ><use href="#mat"/></svg>
<span class="t" style="left:186px;top:552px;">flbrown</span>
<svg style="left:154.0px;top:583.0px" width="22" height="22" ><use href="#mat"/></svg>
<span class="t" style="left:186px;top:582px;">amber</span>
<svg style="left:154.0px;top:613.0px" width="22" height="22" ><use href="#mat"/></svg>
<span class="t" style="left:186px;top:612px;">amber_Pot_185</span>
<svg style="left:154.0px;top:643.0px" width="22" height="22" ><use href="#mat"/></svg>
<span class="t" style="left:186px;top:642px;">amber_Pot_214</span>
<svg style="left:154.0px;top:673.0px" width="22" height="22" ><use href="#mat"/></svg>
<span class="t" style="left:186px;top:672px;">white</span>
<svg style="left:154.0px;top:703.0px" width="22" height="22" ><use href="#mat"/></svg>
<span class="t" style="left:186px;top:702px;">flltgrey</span>
<svg style="left:154.0px;top:733.0px" width="22" height="22" ><use href="#mat"/></svg>
<span class="t" style="left:186px;top:732px;">yellowbrt</span>
<svg style="left:154.0px;top:763.0px" width="22" height="22" ><use href="#mat"/></svg>
<span class="t" style="left:186px;top:762px;">silver</span>
<svg style="left:154.0px;top:793.0px" width="22" height="22" ><use href="#mat"/></svg>
<span class="t" style="left:186px;top:792px;">grey</span>
<svg style="left:154.0px;top:823.0px" width="22" height="22" ><use href="#mat"/></svg>
<span class="t" style="left:186px;top:822px;">bottom</span>
<svg style="left:154.0px;top:853.0px" width="22" height="22" ><use href="#mat"/></svg>
<span class="t" style="left:186px;top:852px;">top</span>
<svg style="left:154.0px;top:883.0px" width="22" height="22" ><use href="#mat"/></svg>
<span class="t" style="left:186px;top:882px;">left</span>
<svg style="left:154.0px;top:913.0px" width="22" height="22" ><use href="#mat"/></svg>
<span class="t" style="left:186px;top:912px;">right</span>
<svg style="left:154.0px;top:943.0px" width="22" height="22" ><use href="#mat"/></svg>
<span class="t" style="left:186px;top:942px;">back</span>
<svg style="left:154.0px;top:973.0px" width="22" height="22" ><use href="#mat"/></svg>
<span class="t" style="left:186px;top:972px;">front</span>
<svg style="left:154.0px;top:1003.0px" width="22" height="22" ><use href="#mat"/></svg>
<span class="t" style="left:186px;top:1002px;">white_Corps_289</span>
<svg style="left:154.0px;top:1033.0px" width="22" height="22" ><use href="#mat"/></svg>
<span class="t" style="left:186px;top:1032px;">top_Cylinder_294</span>
<svg style="left:154.0px;top:1063.0px" width="22" height="22" ><use href="#mat"/></svg>
<span class="t" style="left:186px;top:1062px;">cylinder</span>
<svg style="left:154.0px;top:1093.0px" width="22" height="22" ><use href="#mat"/></svg>
<span class="t" style="left:186px;top:1092px;">bottom_Cylinder_96_296</span>
<svg style="left:154.0px;top:1123.0px" width="22" height="22" ><use href="#mat"/></svg>
<span class="t" style="left:186px;top:1122px;">white_Corps_308</span>
<svg style="left:154.0px;top:1153.0px" width="22" height="22" ><use href="#mat"/></svg>
<span class="t" style="left:186px;top:1152px;">dkgrey</span>
<svg style="left:154.0px;top:1183.0px" width="22" height="22" ><use href="#mat"/></svg>
<span class="t" style="left:186px;top:1182px;">flwhite1</span>
<svg style="left:154.0px;top:1213.0px" width="22" height="22" ><use href="#mat"/></svg>
<span class="t" style="left:186px;top:1212px;">dkgrey_Tube_1_398</span>
<svg style="left:154.0px;top:1243.0px" width="22" height="22" ><use href="#mat"/></svg>
<span class="t" style="left:186px;top:1242px;">amber_Assise_400</span>
<svg style="left:154.0px;top:1273.0px" width="22" height="22" ><use href="#mat"/></svg>
<span class="t" style="left:186px;top:1272px;">default</span>
</div>
<div id="bot"><div style="left:13px;top:4px;width:46px;height:20px;border:1px solid #3e3e3e;border-radius:6px"></div><div style="left:250px;top:4px;width:170px;height:20px;border:1px solid #3e3e3e;border-radius:6px;background:#1d1d1d"></div><div style="left:622px;top:4px;width:30px;height:20px;border:1px solid #3e3e3e;border-radius:6px"></div></div>
<div id="tb" style="left:0;top:0;width:1734px;height:43px;will-change:transform">
<div style="left:1145px;top:8px;width:47.5px;height:30px;background:#282828;border:1px solid #3e3e3e;border-right:none;border-radius:6px 0 0 6px"></div>
<div style="left:1192.5px;top:8px;width:179.5px;height:30px;background:#1d1d1d;border:1px solid #3e3e3e;border-right:none"></div>
<div style="left:1372.0px;top:8px;width:30.0px;height:30px;background:#545454"></div>
<div style="left:1402.5px;top:8px;width:30.5px;height:30px;background:#2c2c2c;border-radius:0 6px 6px 0"></div>
<span class="t" style="left:1204px;top:9px;color:#e2e2e2">Scene</span>
<svg style="left:1375.0px;top:11.0px" width="24" height="24" viewBox="1375.0 11 24 24"><g transform="translate(1375.0 11)">
<path d="M7.9 2.2 H16.4 L21.2 6.6 V16.4 H7.9 Z" fill="none" stroke="#dedede" stroke-width="1.5"/>
<path d="M16 2.2 V7 H21.2 Z" fill="#dedede"/>
<path d="M5.4 6.4 H2.4 V21.6 H15.4 V19" fill="none" stroke="#dedede" stroke-width="1.5"/></g></svg>
<svg style="left:1410.5px;top:16.0px" width="14" height="14" viewBox="1410.5 16 14 14"><path d="M1412.3 17.8 L1422.7 28.2 M1422.7 17.8 L1412.3 28.2" stroke="#838383" stroke-width="1.4" fill="none"/></svg>
<svg style="left:1150.0px;top:10.0px" width="26" height="26" viewBox="1150 10 26 26">
<path d="M1159.3 12.2 Q1160.4 12 1160.9 13.4 L1164.2 21.4 Q1160.4 23.6 1160.2 28.2 Q1160.3 29.8 1160.8 30.6 Q1155.2 30.4 1152.4 28 Q1151.9 27.2 1152.3 26.2 L1158 13.2 Q1158.5 12.2 1159.3 12.2 Z" fill="#dedede"/>
<circle cx="1170.4" cy="15.4" r="3.3" fill="#dedede"/>
<circle cx="1167.5" cy="27.4" r="5.3" fill="none" stroke="#dedede" stroke-width="1.6"/>
<path d="M1164.9 26.6 A2.8 2.8 0 0 1 1167.2 24.6" fill="none" stroke="#dedede" stroke-width="1.1"/></svg>
<svg style="left:1177.5px;top:20.9px" width="11" height="7" viewBox="0 0 11 7"><path d="M0.9 0.9 L5.5 5.6 L10.1 0.9" fill="none" stroke="#dedede" stroke-width="1.6"/></svg>
<div style="left:1440.5px;top:8px;width:47.5px;height:30px;background:#282828;border:1px solid #3e3e3e;border-right:none;border-radius:6px 0 0 6px"></div>
<div style="left:1488.0px;top:8px;width:179.0px;height:30px;background:#1d1d1d;border:1px solid #3e3e3e;border-right:none"></div>
<div style="left:1667.0px;top:8px;width:30.3px;height:30px;background:#545454"></div>
<div style="left:1697.8px;top:8px;width:29.9px;height:30px;background:#2c2c2c;border-radius:0 6px 6px 0"></div>
<span class="t" style="left:1499px;top:9px;color:#e2e2e2">ViewLayer</span>
<svg style="left:1670.2px;top:11.0px" width="24" height="24" viewBox="1670.15 11 24 24"><g transform="translate(1670.15 11)">
<path d="M7.9 2.2 H16.4 L21.2 6.6 V16.4 H7.9 Z" fill="none" stroke="#dedede" stroke-width="1.5"/>
<path d="M16 2.2 V7 H21.2 Z" fill="#dedede"/>
<path d="M5.4 6.4 H2.4 V21.6 H15.4 V19" fill="none" stroke="#dedede" stroke-width="1.5"/></g></svg>
<svg style="left:1705.5px;top:16.0px" width="14" height="14" viewBox="1705.5 16 14 14"><path d="M1707.3 17.8 L1717.7 28.2 M1717.7 17.8 L1707.3 28.2" stroke="#838383" stroke-width="1.4" fill="none"/></svg>
<svg style="left:1446.5px;top:11.4px" width="25" height="25" viewBox="1446.5 11.4 25 25"><g transform="translate(1447.5 12.4)">
<path fill-rule="evenodd" fill="#dedede" d="M6.4 0 H21.6 V15.2 H6.4 Z M7.8 1.4 V13.8 H20.2 V1.4 Z"/>
<path d="M7.8 13.8 L12.4 4.4 L17.6 13.8 Z" fill="#dedede"/><circle cx="17.3" cy="4.6" r="1.5" fill="#dedede"/>
<path d="M3.6 3.6 V17.9 H18" fill="none" stroke="#dedede" stroke-width="1.3"/>
<path d="M0.7 7 V21 H15" fill="none" stroke="#dedede" stroke-width="1.3"/></g></svg>
<svg style="left:1472.9px;top:20.9px" width="11" height="7" viewBox="0 0 11 7"><path d="M0.9 0.9 L5.5 5.6 L10.1 0.9" fill="none" stroke="#dedede" stroke-width="1.6"/></svg>
</div>
</body></html>
